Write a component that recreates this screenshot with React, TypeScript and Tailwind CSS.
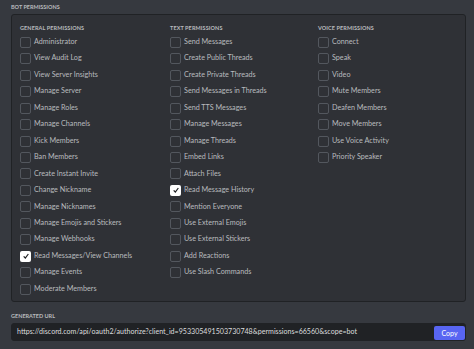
import React from 'react';

const general = [
  'Administrator',
  'View Audit Log',
  'View Server Insights',
  'Manage Server',
  'Manage Roles',
  'Manage Channels',
  'Kick Members',
  'Ban Members',
  'Create Instant Invite',
  'Change Nickname',
  'Manage Nicknames',
  'Manage Emojis and Stickers',
  'Manage Webhooks',
  'Read Messages/View Channels',
  'Manage Events',
  'Moderate Members',
];

const text = [
  'Send Messages',
  'Create Public Threads',
  'Create Private Threads',
  'Send Messages in Threads',
  'Send TTS Messages',
  'Manage Messages',
  'Manage Threads',
  'Embed Links',
  'Attach Files',
  'Read Message History',
  'Mention Everyone',
  'Use External Emojis',
  'Use External Stickers',
  'Add Reactions',
  'Use Slash Commands',
];

const voice = [
  'Connect',
  'Speak',
  'Video',
  'Mute Members',
  'Deafen Members',
  'Move Members',
  'Use Voice Activity',
  'Priority Speaker',
];

const checked = new Set(['Read Messages/View Channels', 'Read Message History']);

const Checkbox: React.FC<{ on: boolean }> = ({ on }) =>
  on ? (
    <div className="flex h-[11px] w-[11px] shrink-0 items-center justify-center rounded-[2px] bg-white">
      <svg viewBox="0 0 12 12" className="h-[8px] w-[8px]">
        <path d="M2.5 6.5 L5 9 L9.5 3" fill="none" stroke="#1e1f22" strokeWidth="1.8" />
      </svg>
    </div>
  ) : (
    <div className="h-[11px] w-[11px] shrink-0 rounded-[2px] border border-[#53575e]" />
  );

const Column: React.FC<{ title: string; items: string[] }> = ({ title, items }) => (
  <div className="flex flex-col">
    <div className="mb-[1px] flex h-[9px] items-center text-[5.5px] font-bold uppercase tracking-[0.1px] text-[#b9bbbe]">
      {title}
    </div>
    {items.map((item) => (
      <div key={item} className="flex h-[16.47px] items-center gap-[3px]">
        <Checkbox on={checked.has(item)} />
        <span className="whitespace-nowrap text-[7.2px] text-[#b9bbbe]">{item}</span>
      </div>
    ))}
  </div>
);

export default function App() {
  return (
    <div
      className="flex h-[349px] w-[474px] flex-col bg-[#36393f] pl-[11px] pr-[8px]"
      style={{ fontFamily: 'Lato, "Open Sans", sans-serif' }}
    >
      <div className="flex h-[14px] items-center text-[5.5px] font-bold uppercase text-[#b9bbbe]">
        Bot Permissions
      </div>
      <div className="grid h-[288px] grid-cols-[150px_148px_1fr] rounded-[3px] border border-[#202225] bg-[#2f3136] pl-[8px] pt-[9px]">
        <Column title="General Permissions" items={general} />
        <Column title="Text Permissions" items={text} />
        <Column title="Voice Permissions" items={voice} />
      </div>
      <div className="flex h-[21px] items-center pt-[7px] text-[5.5px] font-bold uppercase text-[#b9bbbe]">
        Generated URL
      </div>
      <div className="flex h-[18px] items-center justify-between rounded-[3px] border border-[#202225] bg-[#202225] pl-[5px]">
        <span className="whitespace-nowrap text-[7.1px] text-[#dcddde]">
          https://discord.com/api/oauth2/authorize?client_id=953305491503730748&amp;permissions=66560&amp;scope=bot
        </span>
        <button className="mt-[2px] flex h-[14px] w-[31px] items-center justify-center rounded-[2px] bg-[#5865f2] text-[7px] text-white">
          Copy
        </button>
      </div>
    </div>
  );
}
